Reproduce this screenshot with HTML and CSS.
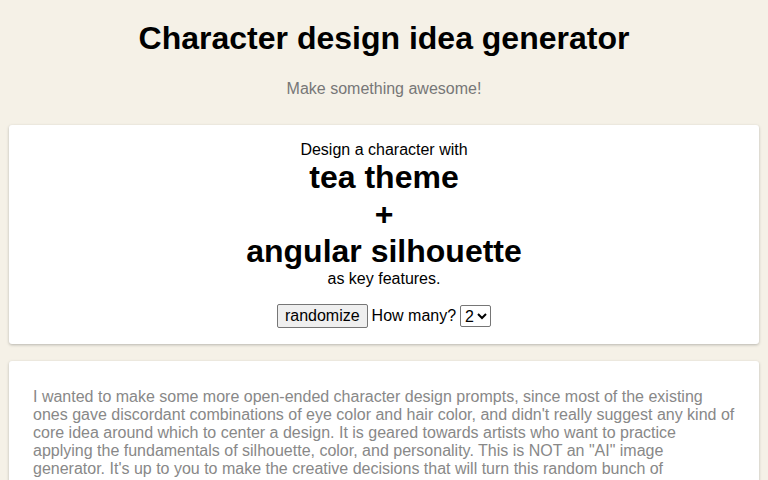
FILE: index.html
```html
<!DOCTYPE html>
<html>
<head>
<meta charset="utf-8">
<link rel="stylesheet" href="styles.css">
</head>
<body>
<div class="page">
  <header class="header">
    <h1 class="title">Character design idea generator</h1>
    <p class="subtitle">Make something awesome!</p>
  </header>
  <section class="card generator">
    <div class="line">Design a character with</div>
    <div class="big">tea theme</div>
    <div class="big">+</div>
    <div class="big">angular silhouette</div>
    <div class="line">as key features.</div>
    <div class="controls">
      <button class="btn">randomize</button>
      <span>How many?</span>
      <select class="sel"><option>1</option><option selected>2</option><option>3</option></select>
    </div>
  </section>
  <section class="card about">
    <p class="text">I wanted to make some more open-ended character design prompts, since most of the existing ones gave discordant combinations of eye color and hair color, and didn't really suggest any kind of core idea around which to center a design. It is geared towards artists who want to practice applying the fundamentals of silhouette, color, and personality. This is NOT an "AI" image generator. It's up to you to make the creative decisions that will turn this random bunch of descriptors into something awesome.</p>
  </section>
</div>
</body>
</html>
```
FILE: styles.css
```css
html, body {
  margin: 0;
  padding: 0;
  background: #f5f1e7;
  font-family: "Liberation Sans", Arial, sans-serif;
  color: #000;
}
.page {
  padding: 0 9px;
  display: flex;
  flex-direction: column;
  gap: 17px;
}
.header {
  text-align: center;
  padding-top: 20px;
  padding-bottom: 10px;
}
.title {
  margin: 0;
  font-size: 32px;
  line-height: 37px;
  font-weight: bold;
}
.subtitle {
  margin: 23px 0 0;
  font-size: 16px;
  line-height: 18px;
  color: #777;
}
.card {
  background: #fff;
  border-radius: 3px;
  box-shadow: 0 1px 3px rgba(0,0,0,0.25);
}
.generator {
  text-align: center;
  padding: 16px 24px;
  font-size: 16px;
  line-height: 18px;
}
.big {
  font-size: 32px;
  line-height: 37px;
  font-weight: bold;
}
.controls {
  margin-top: 16px;
  display: flex;
  justify-content: center;
  align-items: center;
  gap: 4px;
  height: 24px;
}
.btn {
  font-family: "Liberation Sans", Arial, sans-serif;
  font-size: 16px;
  height: 24px;
  padding: 1px 7px;
  background: #efefef;
  border: 1px solid #767676;
  border-radius: 2px;
  color: #000;
}
.sel {
  font-family: "Liberation Sans", Arial, sans-serif;
  font-size: 16px;
  height: 22px;
  width: 31px;
  border: 1px solid #767676;
  border-radius: 2px;
  background: #fff;
  color: #000;
}
.about {
  padding: 27px 24px 24px;
}
.text {
  margin: 0;
  font-size: 16px;
  line-height: 18px;
  color: #888;
}
```
